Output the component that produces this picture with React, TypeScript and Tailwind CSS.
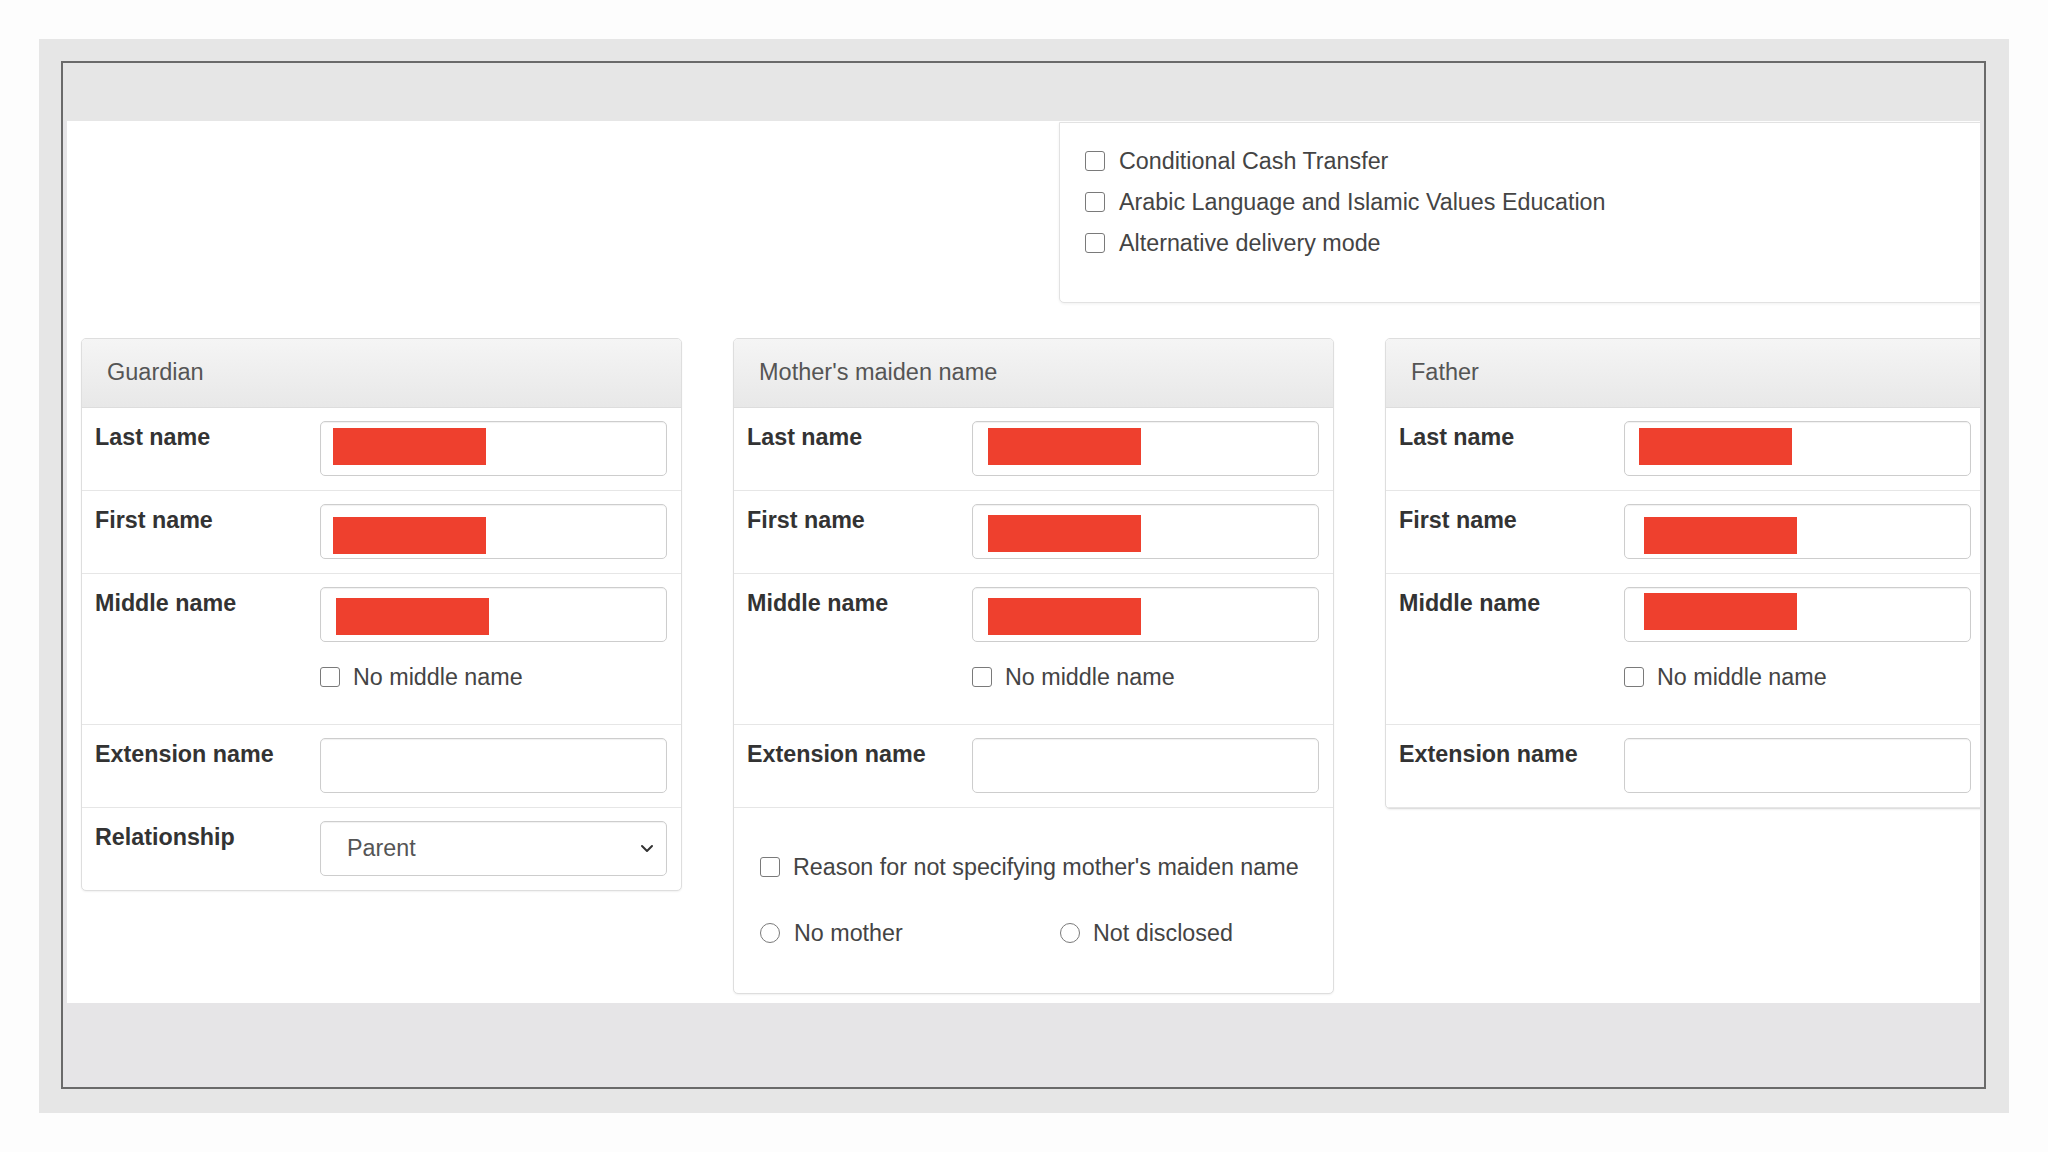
import { ReactNode } from "react";

type Field = {
  label: string;
  red?: string; // offsets of the redaction block inside the input
  middle?: boolean;
  select?: string;
  last?: boolean;
};

const guardian: Field[] = [
  { label: "Last name", red: "ml-[12px] mt-[6px]" },
  { label: "First name", red: "ml-[12px] mt-[12px]" },
  { label: "Middle name", red: "ml-[15px] mt-[10px]", middle: true },
  { label: "Extension name" },
  { label: "Relationship", select: "Parent", last: true },
];

const mother: Field[] = [
  { label: "Last name", red: "ml-[15px] mt-[6px]" },
  { label: "First name", red: "ml-[15px] mt-[10px]" },
  { label: "Middle name", red: "ml-[15px] mt-[10px]", middle: true },
  { label: "Extension name" },
];

const father: Field[] = [
  { label: "Last name", red: "ml-[14px] mt-[6px]" },
  { label: "First name", red: "ml-[19px] mt-[12px]" },
  { label: "Middle name", red: "ml-[19px] mt-[5px]", middle: true },
  { label: "Extension name" },
];

function Box() {
  return <span className="block w-[20px] h-[20px] shrink-0 rounded-[3px] border-[1.5px] border-[#7a7a7a] bg-white" />;
}

function Radio() {
  return <span className="block w-[20px] h-[20px] shrink-0 rounded-full border-[1.5px] border-[#7a7a7a] bg-white" />;
}

function Check({ children, gap = "gap-[14px]" }: { children: ReactNode; gap?: string }) {
  return (
    <div className={`flex items-center h-[20px] ${gap}`}>
      <Box />
      <span className="text-[23.3px] leading-[28px] text-[#444]">{children}</span>
    </div>
  );
}

function Input({ red, select }: { red?: string; select?: string }) {
  return (
    <div className="w-[347px] h-[55px] rounded-[5px] border border-[#cdcdcd] bg-white shadow-[inset_0_1px_1px_rgba(0,0,0,0.06)] overflow-hidden">
      {red && <div className={`w-[153px] h-[37px] bg-[#ee402e] ${red}`} />}
      {select && (
        <div className="flex h-full items-center justify-between pl-[26px] pr-[12px]">
          <span className="text-[23.3px] text-[#555]">{select}</span>
          <svg width="14" height="9" viewBox="0 0 14 9" fill="none">
            <polyline points="2,2 7,7 12,2" stroke="#333" strokeWidth="2" strokeLinecap="round" strokeLinejoin="round" />
          </svg>
        </div>
      )}
    </div>
  );
}

function Row({ f }: { f: Field }) {
  return (
    <div className={`flex items-start pt-[13px] ${f.middle ? "pb-[37px]" : "pb-[14px]"} ${f.last ? "" : "border-b border-[#e6e6e6]"}`}>
      <div className="w-[238px] shrink-0 pl-[13px] pt-[2px] text-[23.3px] leading-[28px] font-bold text-[#333]">{f.label}</div>
      <div className="flex flex-col">
        <Input red={f.red} select={f.select} />
        {f.middle && (
          <div className="mt-[25px]">
            <Check gap="gap-[13px]">No middle name</Check>
          </div>
        )}
      </div>
    </div>
  );
}

function Card({ title, fields, children }: { title: string; fields: Field[]; children?: ReactNode }) {
  return (
    <div className="w-[601px] shrink-0 self-start rounded-[5px] border border-[#dedede] bg-white shadow-[0_1px_2px_rgba(0,0,0,0.06)] overflow-hidden">
      <div className="h-[69px] flex items-center pl-[25px] border-b border-[#dddddd] bg-gradient-to-b from-[#f5f5f5] to-[#e8e8e8] text-[23.5px] text-[#555]">
        {title}
      </div>
      {fields.map((f) => (
        <Row key={f.label} f={f} />
      ))}
      {children}
    </div>
  );
}

export default function App() {
  return (
    <div className="w-[2048px] h-[1152px] bg-[#fdfdfd] pt-[39px] pl-[39px] font-['Liberation_Sans',Arial,sans-serif]">
      <div className="w-[1970px] h-[1074px] bg-[#e6e6e6] pt-[22px] pl-[22px]">
        <div className="w-[1925px] h-[1028px] border-2 border-[#6a6a6a] bg-[#e6e5e7] flex flex-col">
          <div className="h-[58px] shrink-0 bg-[#e6e6e6]" />
          <div className="mx-[4px] h-[882px] shrink-0 bg-white overflow-hidden">
            {/* programmes box, clipped on the right */}
            <div className="ml-[992px] mt-[1px] w-[960px] h-[181px] rounded-bl-[5px] border border-[#e2e2e2] bg-white shadow-[0_1px_3px_rgba(0,0,0,0.06)] pt-[28px] pl-[25px] flex flex-col gap-[21px]">
              <Check>Conditional Cash Transfer</Check>
              <Check>Arabic Language and Islamic Values Education</Check>
              <Check>Alternative delivery mode</Check>
            </div>

            <div className="mt-[35px] pl-[14px] flex gap-[51px]">
              <Card title="Guardian" fields={guardian} />
              <Card title="Mother's maiden name" fields={mother}>
                <div className="pt-[49px] pb-[50px] pl-[26px]">
                  <Check gap="gap-[13px]">Reason for not specifying mother's maiden name</Check>
                  <div className="mt-[46px] flex items-center h-[20px]">
                    <div className="w-[300px] flex items-center gap-[14px]">
                      <Radio />
                      <span className="text-[23.3px] leading-[28px] text-[#444]">No mother</span>
                    </div>
                    <div className="flex items-center gap-[13px]">
                      <Radio />
                      <span className="text-[23.3px] leading-[28px] text-[#444]">Not disclosed</span>
                    </div>
                  </div>
                </div>
              </Card>
              <Card title="Father" fields={father} />
            </div>
          </div>
        </div>
      </div>
    </div>
  );
}
